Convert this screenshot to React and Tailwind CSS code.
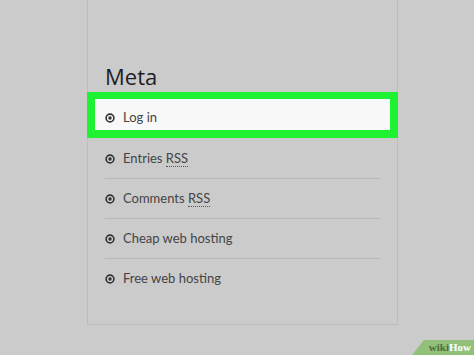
import React from 'react';

const ITEMS = [
    { label: 'Entries', abbr: 'RSS' },
    { label: 'Comments', abbr: 'RSS' },
    { label: 'Cheap web hosting' },
    { label: 'Free web hosting' },
];

function Bullet() {
    return (
        <svg width="10" height="10" viewBox="0 0 10 10" className="shrink-0">
            <circle cx="5" cy="5" r="3.9" fill="none" stroke="#333" strokeWidth="1.6" />
            <circle cx="5" cy="5" r="1.7" fill="#333" />
        </svg>
    );
}

function Row({ item }) {
    return (
        <div className="h-[39px] pt-[1px] flex items-center gap-[8px] text-[13px] text-[#444]">
            <Bullet />
            <span>
                {item.label}
                {item.abbr && (
                    <>
                        {' '}
                        <span className="border-b border-dotted border-[#555]">{item.abbr}</span>
                    </>
                )}
            </span>
        </div>
    );
}

export default function App() {
    return (
        <div
            className="relative w-[474px] h-[355px] overflow-hidden bg-[#cbcbcb]"
            style={{ fontFamily: 'Lato, "Open Sans", sans-serif' }}
        >
            <div className="ml-[87px] w-[311px] h-[325px] border-x border-b border-[#bdbdbd]">
                <h2
                    className="pt-[61px] pl-[17px] text-[22px] leading-[30px] font-normal text-[#1e1e1e]"
                    style={{ fontFamily: '"Open Sans", sans-serif' }}
                >
                    Meta
                </h2>

                {/* highlighted item */}
                <div className="-mx-px mt-px h-[46px] bg-[#1ff233] p-[7px_8px_8px_8px]">
                    <div className="h-full bg-[#f8f8f8] pl-[10px] pt-[7px] flex items-center gap-[8px] text-[13px] text-[#444]">
                        <Bullet />
                        <span>Log in</span>
                    </div>
                </div>

                <div className="px-[17px] pt-px">
                    {ITEMS.map((item, i) => (
                        <div
                            key={item.label}
                            className={i < ITEMS.length - 1 ? 'border-b border-[#b7b7b7]' : ''}
                        >
                            <Row item={item} />
                        </div>
                    ))}
                </div>
            </div>

            {/* watermark */}
            <div
                className="absolute right-0 bottom-0 h-[15px] w-[62px] bg-[#93c078] [clip-path:polygon(12px_0,100%_0,100%_100%,0_100%)] flex items-center justify-end pr-[3px] text-[11px] font-bold leading-none"
                style={{ fontFamily: '"Liberation Serif", serif' }}
            >
                <span className="text-[#4d6d3c]">wiki</span>
                <span className="text-white">How</span>
            </div>
        </div>
    );
}
